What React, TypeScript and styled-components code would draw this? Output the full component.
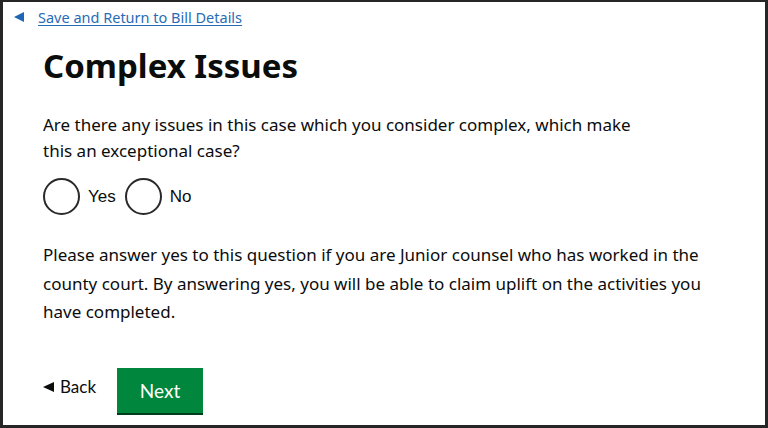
import React from "react";
import styled, { createGlobalStyle } from "styled-components";

const Global = createGlobalStyle`
  html, body { margin: 0; padding: 0; background: #fff; }
  * { box-sizing: border-box; }
`;

const Frame = styled.div`
  width: 768px;
  height: 428px;
  border-style: solid;
  border-color: #262626;
  border-width: 2px 3px 3px 3px;
  background: #fff;
  display: flex;
  flex-direction: column;
  font-family: "Noto Sans", "Liberation Sans", sans-serif;
  color: #0b0c0c;
  overflow: hidden;
`;

const TopLink = styled.a`
  display: flex;
  align-items: center;
  gap: 14px;
  margin: 6px 0 0 11px;
  font-size: 14.5px;
  line-height: 18px;
  color: #2a6bb5;
  text-decoration: underline;
  text-underline-offset: 2px;
  cursor: pointer;
`;

const Triangle = styled.span<{ $size: number; $color: string }>`
  display: inline-block;
  width: 0;
  height: 0;
  border-top: ${(p) => p.$size / 2}px solid transparent;
  border-bottom: ${(p) => p.$size / 2}px solid transparent;
  border-right: ${(p) => p.$size}px solid ${(p) => p.$color};
`;

const Main = styled.div`
  padding-left: 40px;
  display: flex;
  flex-direction: column;
`;

const Heading = styled.h1`
  margin: 20px 0 0 0;
  font-size: 33px;
  line-height: 40px;
  font-weight: 700;
  color: #0b0c0c;
`;

const Question = styled.p`
  margin: 26px 0 0 0;
  font-size: 17px;
  line-height: 26px;
  white-space: nowrap;
`;

const Radios = styled.div`
  display: flex;
  align-items: center;
  margin-top: 14px;
  font-family: "Liberation Sans", Arial, sans-serif;
  font-size: 17px;
`;

const RadioItem = styled.label`
  display: flex;
  align-items: center;
  gap: 8px;
  margin-right: 9px;
`;

const Circle = styled.span`
  width: 37px;
  height: 37px;
  border: 2px solid #2a2a2a;
  border-radius: 50%;
  display: inline-block;
`;

const Para = styled.p`
  margin: 26px 0 0 0;
  font-size: 17px;
  line-height: 28.5px;
  white-space: nowrap;
`;

const Actions = styled.div`
  display: flex;
  align-items: flex-start;
  gap: 21px;
  margin-top: 41px;
`;

const BackLink = styled.a`
  display: flex;
  align-items: center;
  gap: 6px;
  margin-top: 9px;
  font-family: Lato, sans-serif;
  font-size: 17px;
  line-height: 20px;
  color: #0b0c0c;
  cursor: pointer;
`;

const NextButton = styled.button`
  width: 86px;
  height: 47px;
  background: #00873d;
  border: none;
  border-bottom: 2px solid #003d1b;
  color: #fff;
  font-family: Lato, sans-serif;
  font-size: 19px;
  padding: 0;
  cursor: pointer;
`;

export default function App() {
  return (
    <>
      <Global />
      <Frame>
        <TopLink>
          <Triangle $size={10} $color="#1f66b5" />
          Save and Return to Bill Details
        </TopLink>
        <Main>
          <Heading>Complex Issues</Heading>
          <Question>
            Are there any issues in this case which you consider complex, which make
            <br />
            this an exceptional case?
          </Question>
          <Radios>
            <RadioItem>
              <Circle />
              Yes
            </RadioItem>
            <RadioItem>
              <Circle />
              No
            </RadioItem>
          </Radios>
          <Para>
            Please answer yes to this question if you are Junior counsel who has worked in the
            <br />
            county court. By answering yes, you will be able to claim uplift on the activities you
            <br />
            have completed.
          </Para>
          <Actions>
            <BackLink>
              <Triangle $size={11} $color="#0b0c0c" />
              Back
            </BackLink>
            <NextButton>Next</NextButton>
          </Actions>
        </Main>
      </Frame>
    </>
  );
}
